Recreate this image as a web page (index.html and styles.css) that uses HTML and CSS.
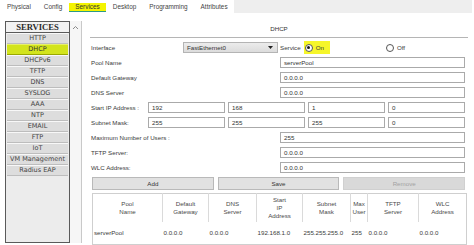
FILE: index.html
```html
<!DOCTYPE html>
<html>
<head>
<meta charset="utf-8">
<link rel="stylesheet" href="styles.css">
</head>
<body>
<div class="tabs">
  <span class="tab">Physical</span>
  <span class="tab">Config</span>
  <span class="tab active">Services</span>
  <span class="tab">Desktop</span>
  <span class="tab">Programming</span>
  <span class="tab">Attributes</span>
  <span class="tab-fill"></span>
</div>
<div class="main">
  <div class="side">
    <div class="side-list">
      <div class="side-head">SERVICES</div>
      <div class="side-item">HTTP</div>
      <div class="side-item sel">DHCP</div>
      <div class="side-item">DHCPv6</div>
      <div class="side-item">TFTP</div>
      <div class="side-item">DNS</div>
      <div class="side-item">SYSLOG</div>
      <div class="side-item">AAA</div>
      <div class="side-item">NTP</div>
      <div class="side-item">EMAIL</div>
      <div class="side-item">FTP</div>
      <div class="side-item">IoT</div>
      <div class="side-item">VM Management</div>
      <div class="side-item">Radius EAP</div>
    </div>
    <div class="scroll">
      <svg class="chev" width="7" height="5" viewBox="0 0 7 5"><path d="M1 4 L3.5 1.5 L6 4" fill="none" stroke="#8a8a8a" stroke-width="1"/></svg>
    </div>
  </div>
  <div class="panel">
    <div class="title">DHCP</div>
    <div class="form">
      <div class="row">
        <span class="lbl lbl-sel">Interface</span>
        <div class="select"><span>FastEthernet0</span><svg width="5" height="3" viewBox="0 0 5 3"><path d="M0 0 H5 L2.5 3 Z" fill="#222"/></svg></div>
        <span class="svc">Service</span>
        <span class="radio hl"><span class="dot on"></span>On</span>
        <span class="radio off"><span class="dot"></span>Off</span>
      </div>
      <div class="row">
        <span class="lbl lbl-wide">Pool Name</span>
        <span class="inp">serverPool</span>
      </div>
      <div class="row">
        <span class="lbl lbl-wide">Default Gateway</span>
        <span class="inp">0.0.0.0</span>
      </div>
      <div class="row">
        <span class="lbl lbl-wide">DNS Server</span>
        <span class="inp">0.0.0.0</span>
      </div>
      <div class="row">
        <span class="lbl lbl-ip">Start IP Address :</span>
        <span class="inp">192</span>
        <span class="inp">168</span>
        <span class="inp">1</span>
        <span class="inp">0</span>
      </div>
      <div class="row">
        <span class="lbl lbl-ip">Subnet Mask:</span>
        <span class="inp">255</span>
        <span class="inp">255</span>
        <span class="inp">255</span>
        <span class="inp">0</span>
      </div>
      <div class="row">
        <span class="lbl lbl-wide">Maximum Number of Users :</span>
        <span class="inp">255</span>
      </div>
      <div class="row">
        <span class="lbl lbl-wide">TFTP Server:</span>
        <span class="inp">0.0.0.0</span>
      </div>
      <div class="row">
        <span class="lbl lbl-wide">WLC Address:</span>
        <span class="inp">0.0.0.0</span>
      </div>
    </div>
    <div class="buttons">
      <span class="btn">Add</span>
      <span class="btn">Save</span>
      <span class="btn disabled">Remove</span>
    </div>
    <table class="pools">
      <colgroup><col><col><col><col><col><col><col><col></colgroup>
      <thead>
        <tr>
          <th>Pool<br>Name</th>
          <th>Default<br>Gateway</th>
          <th>DNS<br>Server</th>
          <th>Start<br>IP<br>Address</th>
          <th>Subnet<br>Mask</th>
          <th>Max<br>User</th>
          <th>TFTP<br>Server</th>
          <th>WLC<br>Address</th>
        </tr>
      </thead>
      <tbody>
        <tr>
          <td>serverPool</td>
          <td>0.0.0.0</td>
          <td>0.0.0.0</td>
          <td>192.168.1.0</td>
          <td>255.255.255.0</td>
          <td>255</td>
          <td>0.0.0.0</td>
          <td>0.0.0.0</td>
        </tr>
      </tbody>
    </table>
  </div>
</div>
</body>
</html>
```

FILE: styles.css
```css
* { box-sizing: border-box; }

html, body {
  margin: 0;
  padding: 0;
  background: #fff;
}

body {
  width: 474px;
  height: 245px;
  overflow: hidden;
  font-family: "Liberation Sans", Arial, sans-serif;
  font-size: 6.2px;
  color: #3a3a3a;
}

/* ---------- top tabs ---------- */
.tabs {
  display: flex;
  height: 14px;
  padding-left: 0.5px;
}

.tab {
  padding: 0 6.5px;
  line-height: 14px;
  font-size: 6.4px;
  color: #444;
  white-space: nowrap;
}

.tab.active {
  background: linear-gradient(to bottom,
    transparent 3px, #f4f400 3px, #f4f400 11px,
    #2c9a86 11px, #2c9a86 12.5px, transparent 12.5px);
  color: #333;
}

.tab-fill {
  flex: 1;
  margin-right: 2px;
  height: 13px;
  background: #eeeeee;
}

/* ---------- layout ---------- */
.main {
  display: flex;
  padding-top: 7px;
}

.side {
  display: flex;
  margin-left: 5px;
  height: 222px;
}

.side-list {
  width: 65px;
  border: 1px solid #5a5a5a;
  background: #ececec;
  padding: 0 1px;
}

.side-head {
  height: 11px;
  margin: 0 -1px;
  border-bottom: 1px solid #5a5a5a;
  background: #f2f2f2;
  font-family: "Liberation Serif", "Times New Roman", serif;
  font-weight: bold;
  font-size: 8.6px;
  line-height: 10px;
  text-align: center;
  color: #2a2a2a;
}

.side-item {
  height: 11px;
  border-top: 1px solid #f8f8f8;
  border-bottom: 1px solid #bdbdbd;
  background: #dddddd;
  font-family: "DejaVu Sans", Verdana, sans-serif;
  font-size: 6.5px;
  line-height: 9px;
  text-align: center;
  color: #444;
  white-space: nowrap;
}

.side-item.sel {
  background: #d3e41c;
  border-top-color: #e6f06a;
  border-bottom-color: #9aa800;
  color: #333;
}

.scroll {
  width: 12px;
  background: #f6f6f6;
  border-right: 1px solid #c9c9c9;
  display: flex;
  justify-content: center;
  padding-top: 4px;
}

.chev { display: block; }

/* ---------- panel ---------- */
.panel {
  width: 378px;
  margin-left: 8px;
}

.title {
  height: 17px;
  line-height: 16px;
  text-align: center;
  border-bottom: 1px solid #b5b5b5;
  color: #333;
}

.form {
  padding: 2px 3px 0 1px;
}

.row {
  display: flex;
  align-items: center;
  gap: 3px;
  height: 15px;
}

.lbl {
  white-space: nowrap;
  color: #3a3a3a;
}
.lbl-sel { width: 89px; }
.lbl-wide { width: 186px; }
.lbl-ip { width: 54px; }

.select {
  width: 95px;
  height: 11px;
  display: flex;
  align-items: center;
  justify-content: space-between;
  padding: 0 4px 0 3px;
  background: linear-gradient(#ececec, #dcdcdc);
  border: 1px solid #b4b4b4;
  color: #333;
}

.svc { margin-left: -1px; }

.radio {
  display: flex;
  align-items: center;
  gap: 3px;
  height: 13px;
}

.radio.hl {
  background: #f6f62a;
  padding: 0 6px 0 1px;
}

.radio.off { margin-left: 53px; }

.dot {
  width: 8px;
  height: 8px;
  border-radius: 50%;
  border: 1px solid #555;
  background: #fff;
  position: relative;
}

.dot.on::after {
  content: "";
  position: absolute;
  left: 1.5px;
  top: 1.5px;
  width: 3px;
  height: 3px;
  border-radius: 50%;
  background: #1a1a1a;
}

.inp {
  flex: 1;
  height: 11px;
  line-height: 9px;
  padding-left: 3px;
  border: 1px solid #aaaaaa;
  background: #fff;
  color: #333;
}

/* ---------- buttons ---------- */
.buttons {
  display: grid;
  grid-template-columns: 1fr 1fr 1fr;
  gap: 4px;
  margin: 2px 3px 0 2px;
}

.btn {
  height: 13px;
  line-height: 11px;
  text-align: center;
  background: #e1e1e1;
  border: 1px solid #b9b9b9;
  color: #333;
}

.btn.disabled {
  background: #d9d9d9;
  border-color: #d0d0d0;
  color: #a2a2a2;
}

/* ---------- table ---------- */
.pools {
  margin: 3px 0 0 2px;
  width: 374px;
  table-layout: fixed;
  border-collapse: collapse;
  border: 1px solid #cfcfcf;
  font-size: 6.2px;
}

.pools col:nth-child(1) { width: 70px; }
.pools col:nth-child(2) { width: 46px; }
.pools col:nth-child(3) { width: 48px; }
.pools col:nth-child(4) { width: 46px; }
.pools col:nth-child(5) { width: 48px; }
.pools col:nth-child(6) { width: 17px; }
.pools col:nth-child(7) { width: 51px; }
.pools col:nth-child(8) { width: 48px; }

.pools th {
  height: 28px;
  padding: 0;
  font-weight: normal;
  line-height: 7.6px;
  text-align: center;
  vertical-align: middle;
  color: #4a4a4a;
  border-right: 1px solid #dadada;
}

.pools th:last-child { border-right: none; }

.pools td {
  height: 23px;
  padding: 0 0 0 1px;
  white-space: nowrap;
  overflow: hidden;
  color: #3a3a3a;
  vertical-align: middle;
}
```
